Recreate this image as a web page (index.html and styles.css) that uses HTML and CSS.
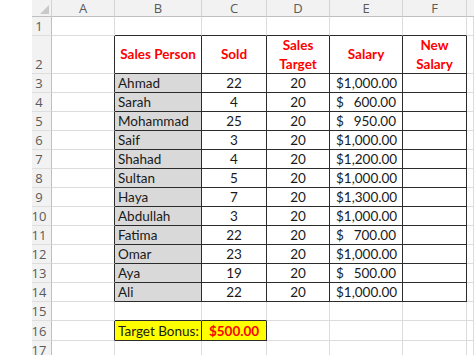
FILE: index.html
```html
<!DOCTYPE html>
<html>
<head>
<meta charset="utf-8">
<link rel="stylesheet" href="styles.css">
</head>
<body>
<div class="sheet">
  <div class="corner"><svg width="10" height="10" viewBox="0 0 10 10"><polygon points="10,0 10,10 0,10" fill="#c9c9c9"/></svg></div>
  <div class="ch">A</div><div class="ch">B</div><div class="ch">C</div><div class="ch">D</div><div class="ch">E</div><div class="ch">F</div><div class="ch last"></div>

  <div class="rh">1</div><div class="c"></div><div class="c ab"></div><div class="c ab"></div><div class="c ab"></div><div class="c ab"></div><div class="c ab"></div><div class="c"></div>

  <div class="rh">2</div><div class="c l"></div><div class="t h">Sales Person</div><div class="t h">Sold</div><div class="t h">Sales<br>Target</div><div class="t h">Salary</div><div class="t h">New<br>Salary</div><div class="c"></div>

  <div class="rh">3</div><div class="c l"></div><div class="t name">Ahmad</div><div class="t num">22</div><div class="t num">20</div><div class="t cur"><span>$</span><span>1,000.00</span></div><div class="t"></div><div class="c"></div>
  <div class="rh">4</div><div class="c l"></div><div class="t name">Sarah</div><div class="t num">4</div><div class="t num">20</div><div class="t cur"><span>$</span><span>600.00</span></div><div class="t"></div><div class="c"></div>
  <div class="rh">5</div><div class="c l"></div><div class="t name">Mohammad</div><div class="t num">25</div><div class="t num">20</div><div class="t cur"><span>$</span><span>950.00</span></div><div class="t"></div><div class="c"></div>
  <div class="rh">6</div><div class="c l"></div><div class="t name">Saif</div><div class="t num">3</div><div class="t num">20</div><div class="t cur"><span>$</span><span>1,000.00</span></div><div class="t"></div><div class="c"></div>
  <div class="rh">7</div><div class="c l"></div><div class="t name">Shahad</div><div class="t num">4</div><div class="t num">20</div><div class="t cur"><span>$</span><span>1,200.00</span></div><div class="t"></div><div class="c"></div>
  <div class="rh">8</div><div class="c l"></div><div class="t name">Sultan</div><div class="t num">5</div><div class="t num">20</div><div class="t cur"><span>$</span><span>1,000.00</span></div><div class="t"></div><div class="c"></div>
  <div class="rh">9</div><div class="c l"></div><div class="t name">Haya</div><div class="t num">7</div><div class="t num">20</div><div class="t cur"><span>$</span><span>1,300.00</span></div><div class="t"></div><div class="c"></div>
  <div class="rh">10</div><div class="c l"></div><div class="t name">Abdullah</div><div class="t num">3</div><div class="t num">20</div><div class="t cur"><span>$</span><span>1,000.00</span></div><div class="t"></div><div class="c"></div>
  <div class="rh">11</div><div class="c l"></div><div class="t name">Fatima</div><div class="t num">22</div><div class="t num">20</div><div class="t cur"><span>$</span><span>700.00</span></div><div class="t"></div><div class="c"></div>
  <div class="rh">12</div><div class="c l"></div><div class="t name">Omar</div><div class="t num">23</div><div class="t num">20</div><div class="t cur"><span>$</span><span>1,000.00</span></div><div class="t"></div><div class="c"></div>
  <div class="rh">13</div><div class="c l"></div><div class="t name">Aya</div><div class="t num">19</div><div class="t num">20</div><div class="t cur"><span>$</span><span>500.00</span></div><div class="t"></div><div class="c"></div>
  <div class="rh">14</div><div class="c l"></div><div class="t name">Ali</div><div class="t num">22</div><div class="t num">20</div><div class="t cur"><span>$</span><span>1,000.00</span></div><div class="t"></div><div class="c"></div>

  <div class="rh">15</div><div class="c"></div><div class="c ab"></div><div class="c ab"></div><div class="c"></div><div class="c"></div><div class="c"></div><div class="c"></div>

  <div class="rh">16</div><div class="c l"></div><div class="t bonus">Target Bonus:</div><div class="t bonusv">$500.00</div><div class="c"></div><div class="c"></div><div class="c"></div><div class="c"></div>

  <div class="rh">17</div><div class="c"></div><div class="c"></div><div class="c"></div><div class="c"></div><div class="c"></div><div class="c"></div><div class="c"></div>
</div>
</body>
</html>
```

FILE: styles.css
```css
html, body {
  margin: 0;
  padding: 0;
  background: #ffffff;
  overflow: hidden;
}

.sheet {
  margin-left: 32px;
  width: 442px;
  display: grid;
  grid-template-columns: 20px 63px 87px 65px 63px 73px 64px 1fr;
  grid-template-rows: 17px 19px 38px repeat(12, 19px) 19px 20px 19px;
  font-family: Lato, "Open Sans", sans-serif;
  font-size: 13.5px;
  color: #1a1a1a;
}

.sheet > div {
  box-sizing: border-box;
  min-width: 0;
  overflow: hidden;
  white-space: nowrap;
}

.corner {
  background: #f2f2f2;
  border-right: 1px solid #d4d4d4;
  border-bottom: 1px solid #bfbfbf;
  display: flex;
  align-items: flex-end;
  justify-content: flex-end;
  padding: 0 2px 2px 0;
}

.corner svg {
  display: block;
  width: 9px;
  height: 9px;
}

.ch {
  background: #f2f2f2;
  border-right: 1px solid #d4d4d4;
  border-bottom: 1px solid #bfbfbf;
  color: #5a5a5a;
  font-family: "Open Sans", sans-serif;
  font-size: 13px;
  display: flex;
  align-items: center;
  justify-content: center;
}

.ch.last {
  border-right: none;
}

.rh {
  background: #f2f2f2;
  border-right: 1px solid #bfbfbf;
  border-bottom: 1px solid #dedede;
  color: #5a5a5a;
  font-family: "Open Sans", sans-serif;
  font-size: 13px;
  line-height: 18px;
  display: flex;
  align-items: flex-end;
  justify-content: center;
  padding-right: 5px;
}

.c {
  border-right: 1px solid #dcdcdc;
  border-bottom: 1px solid #dcdcdc;
}

.c.l {
  border-right-color: #2b2b2b;
}

.c.ab {
  border-bottom-color: #2b2b2b;
}

.t {
  border-right: 1px solid #2b2b2b;
  border-bottom: 1px solid #2b2b2b;
  display: flex;
  align-items: center;
  line-height: 18px;
}

.t.h {
  justify-content: center;
  text-align: center;
  color: #ff0000;
  font-weight: 700;
  line-height: 19px;
}

.t.name {
  background: #d9d9d9;
  padding-left: 3px;
}

.t.num {
  justify-content: center;
}

.t.cur {
  justify-content: space-between;
  padding: 0 6px 0 6px;
}

.t.bonus {
  background: #ffff00;
  padding-left: 3px;
}

.t.bonusv {
  background: #ffff00;
  color: #ff0000;
  font-weight: 700;
  justify-content: center;
}
```
